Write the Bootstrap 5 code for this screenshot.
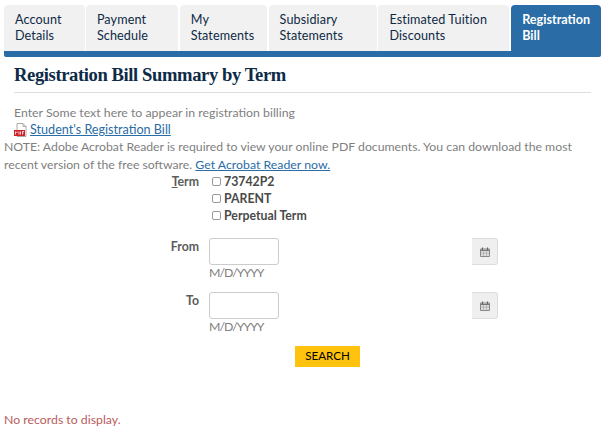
<!DOCTYPE html>
<html lang="en"><head><meta charset="utf-8">
<title>Registration Bill</title>
<link href="https://cdn.jsdelivr.net/npm/bootstrap@5.3.0/dist/css/bootstrap.min.css" rel="stylesheet">
<style>
html,body{height:430px;overflow:hidden}
body{font-family:Lato,"Noto Sans",sans-serif;font-size:12.3px;color:#808080;background:#fff;line-height:18px}
a{color:#2a6ca5;font-size:12.6px}
.note a{font-size:12.3px}
.tabbar{margin:5px 6px 0 4px;gap:1px;border-bottom:6px solid #2a6ca5;height:52px;border-radius:0 0 2px 2px}
.tabitem{background:#f1f1f1;border-radius:4px 4px 0 0;padding:7px 8px 0 11px;line-height:16px;color:#0f2a45;font-size:12.6px;letter-spacing:.12px}
.tabitem.on{background:#2a6ca5;color:#fff;font-weight:700;letter-spacing:0}
.t1{width:81px}.t2{width:92px}.t3{width:87px;margin-left:1px}.t4{width:109px;margin-left:1px}.t5{width:131px}.t6{width:90px;margin-left:1px}
.pagehead{margin:4px 16px 0 14px;padding:0 0 3px;border-bottom:1px solid #ddd;font-family:"Liberation Serif",serif;font-weight:700;font-size:18.6px;letter-spacing:-.4px;line-height:27px;color:#0d2a47;height:28px;box-sizing:content-box}
.intro{margin:11px 0 0 14px;line-height:17px}
.pdfmark{width:13px;height:14px;vertical-align:-3px;margin-right:3px}
.note{margin:0 0 0 4px;width:590px;line-height:18px;font-size:12.25px}
.frow{display:grid;grid-template-columns:199px 1fr;column-gap:10px}
.flabel{text-align:right;font-weight:700;color:#5c5c5c}
.chk{gap:3px;line-height:17px;font-weight:700;color:#4a4a4a;margin-left:3px;height:17px}
.chk input{width:9px;height:9px;margin:0;appearance:none;border:1px solid #999;border-radius:2px;background:#fff}
.termrow{margin-top:-1px}
.daterow{height:54px}
.firstdate{margin-top:14px}
.dateinput{width:70px;height:27px;border:1px solid #ccc;border-radius:3px;display:block;padding:0}
.datebox{width:289px;height:27px}
.calbtn{width:26px;height:27px;background:#efefef;border:1px solid #ddd;border-left:0;border-radius:0 3px 3px 0;padding:0}
.calbtn svg{display:block;margin:auto}
.hint{line-height:14px;display:block;letter-spacing:-1px;margin-top:1px}
.gofind{background:#ffc20e;color:#000;border:0;border-radius:0;width:65px;height:21px;padding:0 0 2px;font-size:11.6px;font-weight:400;line-height:17px;margin-left:295px;display:block}
.norec{color:#b85c5c;margin:44px 0 0 4px}
</style></head><body>
<div class="tabbar d-flex">
<div class="tabitem t1">Account Details</div>
<div class="tabitem t2">Payment Schedule</div>
<div class="tabitem t3">My Statements</div>
<div class="tabitem t4">Subsidiary Statements</div>
<div class="tabitem t5">Estimated Tuition Discounts</div>
<div class="tabitem t6 on">Registration Bill</div>
</div>
<h1 class="pagehead">Registration Bill Summary by Term</h1>
<div class="intro">Enter Some text here to appear in registration billing<br>
<svg class="pdfmark" viewBox="0 0 13 14" aria-hidden="true"><path d="M3 .5h6l3 3v10H3z" fill="#fff" stroke="#aaa"/><path d="M9 .5v3h3" fill="none" stroke="#aaa"/><rect x="0" y="7" width="11" height="6" fill="#d0202a"/><path d="M1.5 8.5v3M3 8.5v1.5M5 8.5v3M6.5 8.5v3M8.5 8.5v3M8.5 8.5h1.5M8.5 10h1" stroke="#fff" stroke-width=".8"/></svg><a href="#">Student's Registration Bill</a></div>
<p class="note">NOTE: Adobe Acrobat Reader is required to view your online PDF documents. You can download the most recent version of the free software. <a href="#">Get Acrobat Reader now.</a></p>
<div class="frow termrow">
<div class="flabel"><u>T</u>erm</div>
<div>
<label class="chk d-flex align-items-center"><input type="checkbox">73742P2</label>
<label class="chk d-flex align-items-center"><input type="checkbox">PARENT</label>
<label class="chk d-flex align-items-center"><input type="checkbox">Perpetual Term</label>
</div></div>
<div class="frow daterow firstdate">
<div class="flabel">From</div>
<div><div class="d-flex justify-content-between datebox"><input class="dateinput" type="text" aria-label="From"><button class="calbtn" type="button" aria-label="Calendar"><svg width="10" height="10" viewBox="0 0 10 10"><path d="M.5 2h9v7.5h-9z" fill="#ddd" stroke="#888"/><path d="M2.5 .5v2.5M7.5 .5v2.5" stroke="#666" stroke-width="1.2"/><path d="M.5 3.5h9" stroke="#777"/><path d="M3.5 4v5M6.5 4v5M1 6.2h8" stroke="#aaa" stroke-width=".7"/></svg></button></div>
<span class="hint">M/D/YYYY</span></div></div>
<div class="frow daterow">
<div class="flabel">To</div>
<div><div class="d-flex justify-content-between datebox"><input class="dateinput" type="text" aria-label="To"><button class="calbtn" type="button" aria-label="Calendar"><svg width="10" height="10" viewBox="0 0 10 10"><path d="M.5 2h9v7.5h-9z" fill="#ddd" stroke="#888"/><path d="M2.5 .5v2.5M7.5 .5v2.5" stroke="#666" stroke-width="1.2"/><path d="M.5 3.5h9" stroke="#777"/><path d="M3.5 4v5M6.5 4v5M1 6.2h8" stroke="#aaa" stroke-width=".7"/></svg></button></div>
<span class="hint">M/D/YYYY</span></div></div>
<button class="gofind btn" type="button">SEARCH</button>
<p class="norec">No records to display.</p>
<script src="https://cdn.jsdelivr.net/npm/bootstrap@5.3.0/dist/js/bootstrap.bundle.min.js"></script>
</body></html>
